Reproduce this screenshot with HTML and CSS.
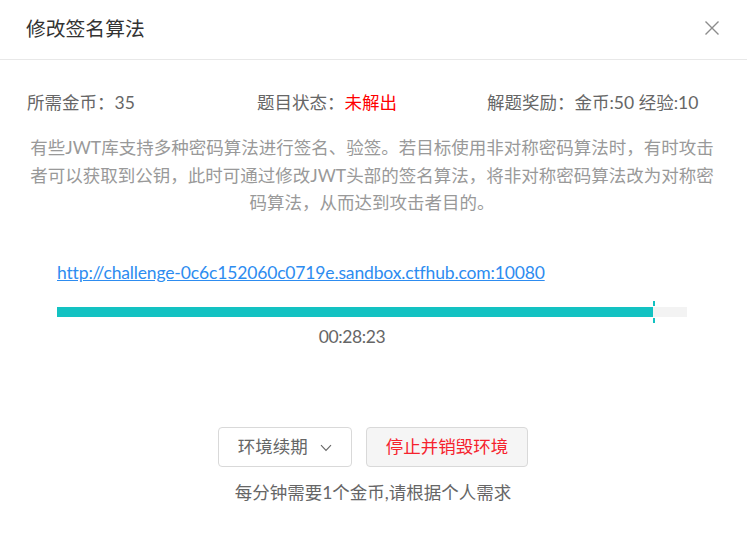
FILE: index.html
```
<!DOCTYPE html>
<html lang="zh-CN">
<head>
<meta charset="utf-8">
<title>修改签名算法</title>
<link rel="stylesheet" href="styles.css">
</head>
<body>
<div class="modal">
  <div class="header">
    <div class="title">修改签名算法</div>
    <svg class="close" width="16" height="16" viewBox="0 0 16 16"><path d="M1.5 1.5 L14.5 14.5 M14.5 1.5 L1.5 14.5" stroke="#8c8c8c" stroke-width="1.4" fill="none"/></svg>
  </div>
  <div class="body">
    <div class="info">
      <div>所需金币：35</div>
      <div>题目状态：<span class="red">未解出</span></div>
      <div>解题奖励：金币:50 经验:10</div>
    </div>
    <p class="desc">有些JWT库支持多种密码算法进行签名、验签。若目标使用非对称密码算法时，有时攻击<br>者可以获取到公钥，此时可通过修改JWT头部的签名算法，将非对称密码算法改为对称密<br>码算法，从而达到攻击者目的。</p>
    <div class="env">
      <a class="link" href="#">http://challenge-0c6c152060c0719e.sandbox.ctfhub.com:10080</a>
      <div class="bar">
        <div class="fill" style="width: 94.6%"></div>
        <div class="marker" style="left: 94.6%"></div>
      </div>
      <div class="time">00:28:23</div>
    </div>
    <div class="actions">
      <button class="btn">环境续期<svg class="chev" width="12" height="8" viewBox="0 0 12 8"><path d="M1 1.2 L6 6.5 L11 1.2" stroke="#666" stroke-width="1.1" fill="none"/></svg></button>
      <button class="btn danger">停止并销毁环境</button>
    </div>
    <div class="note">每分钟需要1个金币,请根据个人需求</div>
  </div>
</div>
</body>
</html>
```
FILE: styles.css
```
* { box-sizing: border-box; }
html, body { margin: 0; padding: 0; background: #fff; }
body {
  font-family: Lato, "Noto Sans CJK SC", "Noto Sans", sans-serif;
  font-size: 17.5px;
  color: #666;
}
.modal { width: 747px; height: 546px; background: #fff; }
.header {
  height: 60px;
  padding: 0 27px 3px 26px;
  border-bottom: 1px solid #e8e8e8;
  display: flex;
  align-items: center;
  justify-content: space-between;
}
.title { font-size: 19.8px; color: #333; line-height: 26px; }
.close { display: block; margin-right: 0; }
.body { padding: 0 30px 0 27px; }
.info {
  margin-top: 31px;
  display: grid;
  grid-template-columns: 230px 230px 230px;
  line-height: 24px;
  color: #666;
}
.red { color: #ff0000; }
.desc {
  margin: 19px 0 0 0;
  padding: 0 3px 0 3px;
  text-align: center;
  color: #999;
  line-height: 27.5px;
  white-space: nowrap;
}
.env { margin-top: 44px; padding-left: 30px; width: 660px; }
.link {
  color: #2d8cf0;
  text-decoration: underline;
  line-height: 24px;
  display: inline-block;
  letter-spacing: -0.15px;
}
.bar {
  position: relative;
  margin-top: 22px;
  height: 10px;
  width: 630px;
  background: #f3f3f3;
}
.fill { height: 100%; background: #13c2c2; }
.marker {
  position: absolute;
  top: -6px;
  width: 2px;
  height: 22px;
  background: linear-gradient(#13c2c2 0 5px, transparent 5px 17px, #13c2c2 17px 22px);
}
.time {
  width: 630px;
  margin-top: 8px;
  padding-right: 40px;
  text-align: center;
  line-height: 24px;
  color: #666;
  letter-spacing: -0.4px;
}
.actions {
  margin-top: 78px;
  display: flex;
  justify-content: center;
  gap: 14px;
  padding-left: 2px;
}
.btn {
  font-family: inherit;
  font-size: 17.5px;
  height: 40px;
  padding: 0 19px;
  border: 1px solid #d9d9d9;
  border-radius: 4px;
  background: #fff;
  color: #666;
  display: flex;
  align-items: center;
  line-height: 1;
}
.chev { margin-left: 12px; margin-top: 2px; }
.danger { background: #f5f5f5; color: #f5222d; }
.note {
  margin-top: 14px;
  text-align: center;
  line-height: 24px;
  color: #666;
  padding-left: 2px;
}
```
